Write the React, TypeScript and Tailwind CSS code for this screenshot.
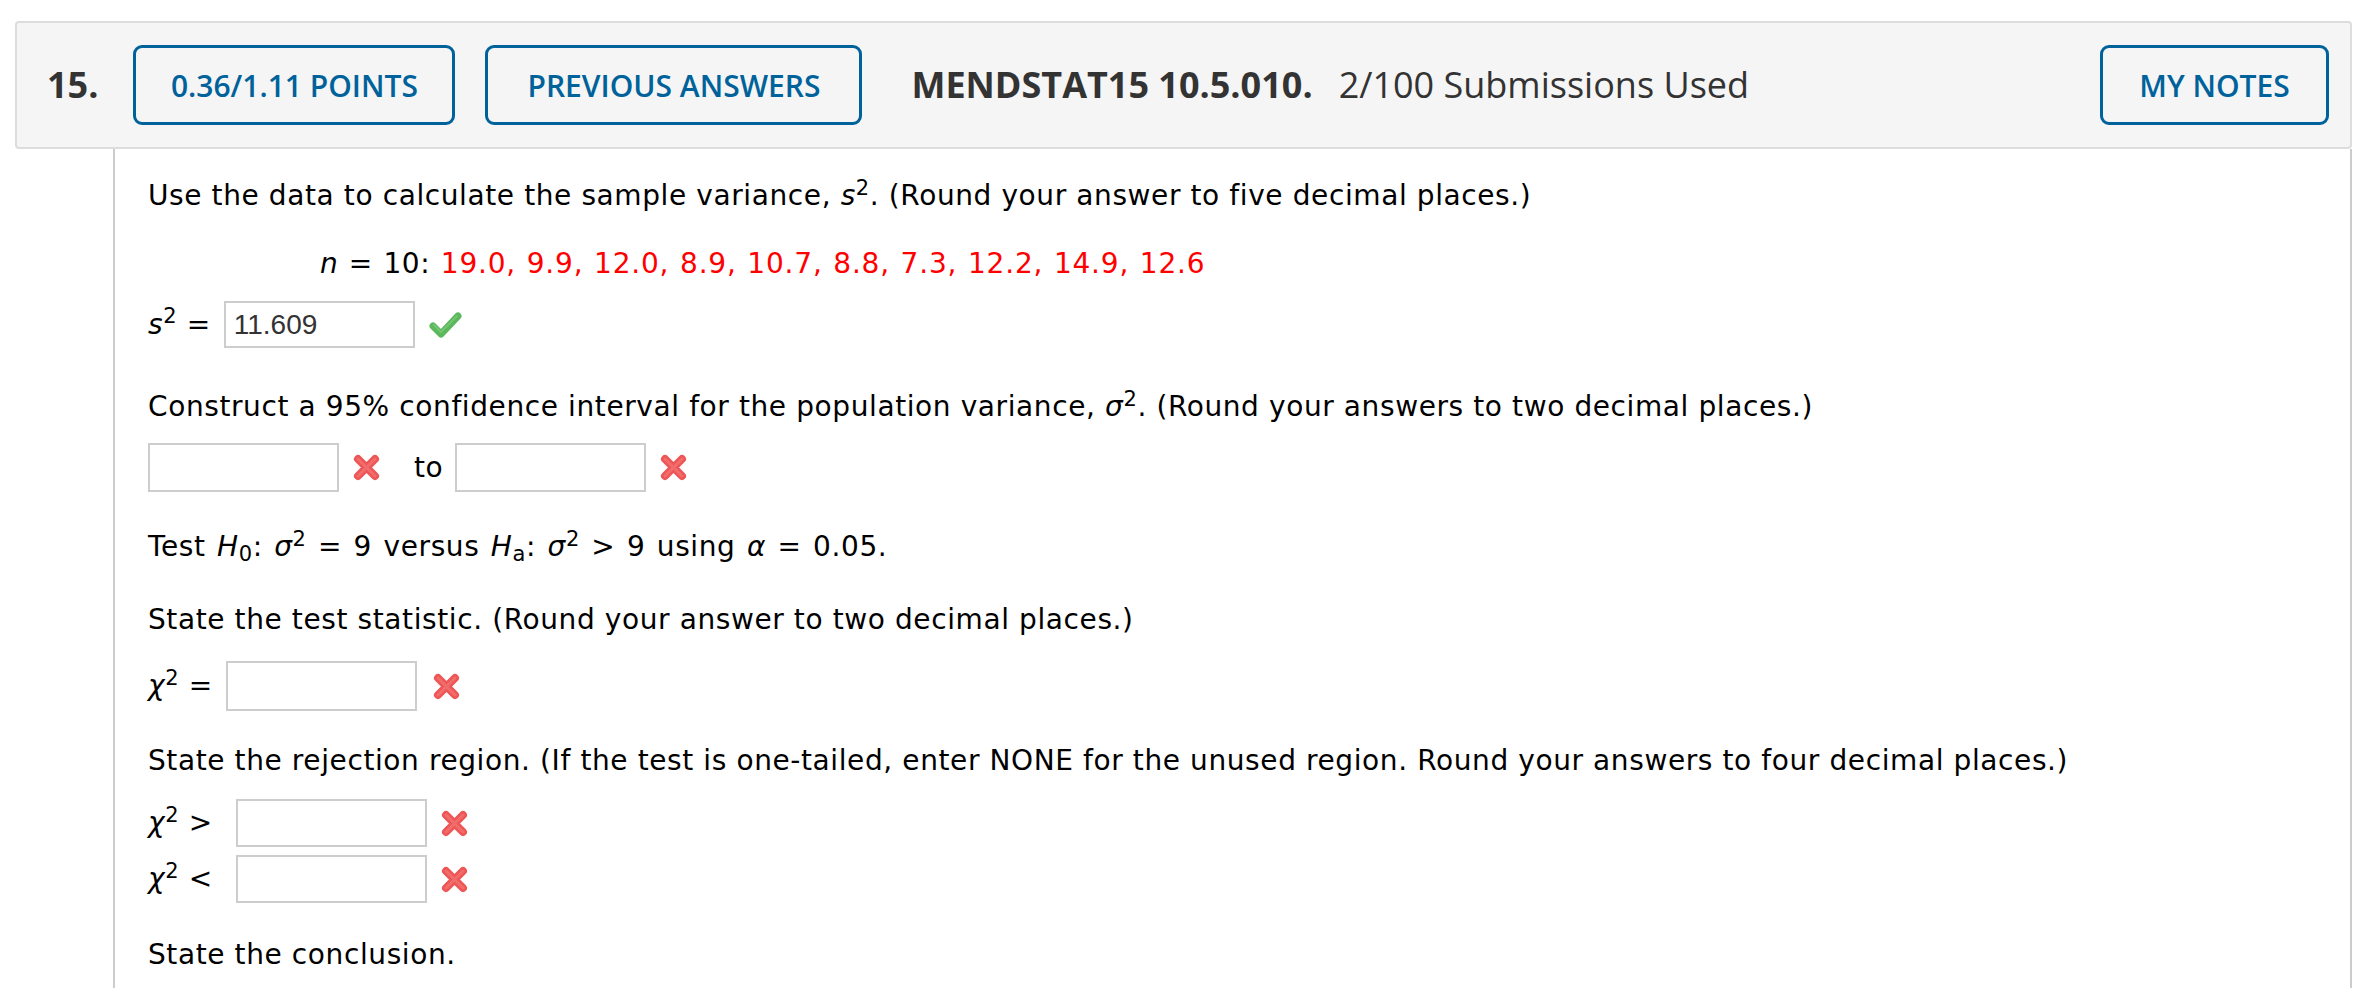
import React from "react";

const blue = "text-[#00629b] border-[#00629b]";

function CrossMark() {
  return (
    <svg width="31" height="31" viewBox="0 0 31 31" className="shrink-0">
      <path d="M7 7 L24 24 M24 7 L7 24" stroke="#ee5656" strokeWidth="8" strokeLinecap="round" />
      <path d="M7 7 L24 24 M24 7 L7 24" stroke="#f47c7c" strokeWidth="3" strokeLinecap="round" opacity="0.6" />
    </svg>
  );
}

function CheckMark() {
  return (
    <svg width="33" height="28" viewBox="0 0 33 28" className="shrink-0">
      <path d="M4 15 L12 23 L29 5" fill="none" stroke="#5cb85c" strokeWidth="7" strokeLinecap="round" strokeLinejoin="round" />
      <path d="M5 14 L12 21 L28 5" fill="none" stroke="#7ccc7c" strokeWidth="2" strokeLinecap="round" opacity="0.7" />
    </svg>
  );
}

function Field({ value = "", width = "w-[191px]", height = "h-[48px]" }: { value?: string; width?: string; height?: string }) {
  return (
    <input
      readOnly
      value={value}
      className={`${width} ${height} shrink-0 border-2 border-[#cdcdcd] bg-white px-[8px] font-['Liberation_Sans',Arial,sans-serif] text-[28px] tracking-normal text-[#333] outline-none`}
    />
  );
}

export default function App() {
  return (
    <div className="min-h-screen bg-white pt-[21px] font-['DejaVu_Sans',Verdana,sans-serif] text-[28px] tracking-[0.6px] text-black">
      {/* header bar */}
      <div className="ml-[15px] mr-[12px] flex h-[128px] items-center rounded-[4px] border-2 border-[#dddddd] bg-[#f5f5f5] pl-[30px] pr-[21px] font-['Open_Sans',sans-serif] tracking-normal">
        <span className="text-[36px] font-bold text-[#333]">15.</span>
        <button className={`ml-[35px] flex h-[80px] w-[322px] items-center justify-center rounded-[9px] border-[3px] ${blue} text-[30px] font-semibold`}>
          0.36/1.11 POINTS
        </button>
        <button className={`ml-[30px] flex h-[80px] w-[377px] items-center justify-center rounded-[9px] border-[3px] ${blue} text-[30px] font-semibold`}>
          PREVIOUS ANSWERS
        </button>
        <span className="ml-[49px] text-[36px] font-bold text-[#333]">MENDSTAT15 10.5.010.</span>
        <span className="ml-[26px] text-[36px] text-[#333]">2/100 Submissions Used</span>
        <button className={`ml-auto flex h-[80px] w-[229px] items-center justify-center rounded-[9px] border-[3px] ${blue} text-[30px] font-semibold`}>
          MY NOTES
        </button>
      </div>

      {/* question body */}
      <div className="ml-[113px] mr-[12px] border-x-2 border-[#cccccc] pb-[20px] pl-[33px] pt-[27px]">
        <p className="h-[40px] leading-[40px]">
          Use the data to calculate the sample variance, <i>s</i><sup>2</sup>. (Round your answer to five decimal places.)
        </p>
        <p className="ml-[172px] mt-[28px] h-[40px] leading-[40px] [word-spacing:1px]">
          <i>n</i> = 10: <span className="text-[#ff0000] tracking-[0.8px]">19.0, 9.9, 12.0, 8.9, 10.7, 8.8, 7.3, 12.2, 14.9, 12.6</span>
        </p>
        <div className="mt-[17px] flex h-[47px] items-center">
          <span className="mr-[13px]">
            <i>s</i><sup>2</sup> =
          </span>
          <Field value="11.609" height="h-[47px]" />
          <span className="ml-[14px]">
            <CheckMark />
          </span>
        </div>

        <p className="mt-[39px] h-[40px] leading-[40px]">
          Construct a 95% confidence interval for the population variance, <i>σ</i><sup>2</sup>. (Round your answers to two decimal places.)
        </p>
        <div className="mt-[16px] flex h-[49px] items-center">
          <Field height="h-[49px]" />
          <span className="ml-[12px]">
            <CrossMark />
          </span>
          <span className="ml-[32px] mr-[12px]">to</span>
          <Field height="h-[49px]" />
          <span className="ml-[12px]">
            <CrossMark />
          </span>
        </div>

        <p className="mt-[35px] h-[40px] leading-[40px] [word-spacing:2px]">
          Test <i>H</i><sub>0</sub>: <i>σ</i><sup>2</sup> = 9 versus <i>H</i><sub>a</sub>: <i>σ</i><sup>2</sup> &gt; 9 using <i>α</i> = 0.05.
        </p>

        <p className="mt-[33px] h-[40px] leading-[40px]">
          State the test statistic. (Round your answer to two decimal places.)
        </p>
        <div className="mt-[21px] flex h-[50px] items-center">
          <span className="mr-[13px]">
            <i>χ</i><sup>2</sup> =
          </span>
          <Field height="h-[50px]" />
          <span className="ml-[14px]">
            <CrossMark />
          </span>
        </div>

        <p className="mt-[30px] h-[40px] leading-[40px]">
          State the rejection region. (If the test is one-tailed, enter NONE for the unused region. Round your answers to four decimal places.)
        </p>
        <div className="mt-[18px] flex h-[48px] items-center">
          <span className="mr-[23px]">
            <i>χ</i><sup>2</sup> &gt;
          </span>
          <Field />
          <span className="ml-[12px]">
            <CrossMark />
          </span>
        </div>
        <div className="mt-[8px] flex h-[48px] items-center">
          <span className="mr-[23px]">
            <i>χ</i><sup>2</sup> &lt;
          </span>
          <Field />
          <span className="ml-[12px]">
            <CrossMark />
          </span>
        </div>

        <p className="mt-[32px] h-[40px] leading-[40px]">State the conclusion.</p>
      </div>
    </div>
  );
}
